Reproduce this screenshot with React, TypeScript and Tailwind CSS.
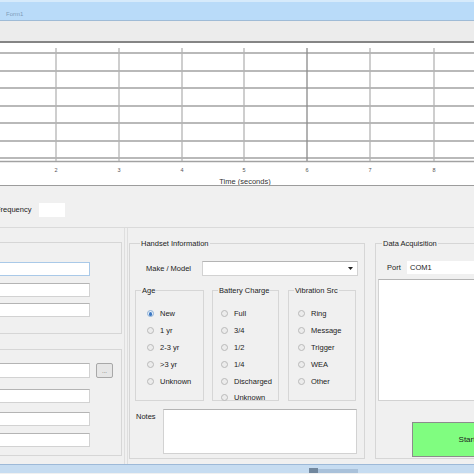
const hLines = [10, 28, 45, 63, 80, 98, 115]
const vLines = [
  { x: 56, label: '2' },
  { x: 119, label: '3' },
  { x: 182, label: '4' },
  { x: 244, label: '5' },
  { x: 307, label: '6' },
  { x: 370, label: '7' },
  { x: 434, label: '8' },
]

const TimeChart = () => (
  <svg width="474" height="143" className="block bg-white">
    {hLines.map((y) => (
      <line key={y} x1="0" x2="474" y1={y} y2={y} stroke="#a2a2a2" strokeWidth="1.3" />
    ))}
    <line x1="0" x2="474" y1="118.5" y2="118.5" stroke="#a2a2a2" strokeWidth="1.3" />
    {vLines.map((v) => (
      <g key={v.x}>
        <line
          x1={v.x}
          x2={v.x}
          y1="5"
          y2="118"
          stroke={v.x === 307 ? '#8a8a8a' : '#b4b4b4'}
          strokeWidth="1.3"
        />
        <text x={v.x} y="129" fontSize="5.5" fill="#555" textAnchor="middle" fontFamily="Liberation Sans, Arial, sans-serif">
          {v.label}
        </text>
      </g>
    ))}
    <text x="245" y="140.5" fontSize="7.5" fill="#333" textAnchor="middle" fontFamily="Liberation Sans, Arial, sans-serif">
      Time (seconds)
    </text>
    <line x1="0" x2="474" y1="142.5" y2="142.5" stroke="#9c9c9c" strokeWidth="1" />
  </svg>
)

const Radio = ({ label, checked = false }: { label: string; checked?: boolean }) => (
  <div className="flex h-[16.8px] items-center">
    <span
      className={`flex h-[7px] w-[7px] shrink-0 items-center justify-center rounded-full border ${
        checked ? 'border-[#8fb0d4] bg-[#e4eef8]' : 'border-[#b9b9b9] bg-[#ececec]'
      }`}
    >
      {checked && <span className="h-[3.5px] w-[3.5px] rounded-full bg-[#3d78c2]" />}
    </span>
    <span className="ml-[6px] whitespace-nowrap">{label}</span>
  </div>
)

const SubGroup = ({
  title,
  items,
  width,
  inset,
}: {
  title: string
  items: { label: string; checked?: boolean }[]
  width: string
  inset: string
}) => (
  <fieldset className={`h-[115px] shrink-0 border border-[#d6d6d6] ${width}`}>
    <legend className="ml-[5px] whitespace-nowrap px-[1px] text-[7.5px] leading-[9px]">{title}</legend>
    <div className={`mt-[10.5px] flex flex-col ${inset}`}>
      {items.map((item) => (
        <Radio key={item.label} label={item.label} checked={item.checked} />
      ))}
    </div>
  </fieldset>
)

const field = 'shrink-0 border border-[#d2d2d2] border-t-[#b4b4b4] bg-white'

export default function App() {
  return (
    <div className="flex h-[474px] w-[474px] flex-col overflow-hidden bg-[#f0f0f0] font-['Liberation_Sans',Arial,sans-serif] text-[7.5px] leading-[9px] text-[#1c1c1c]">
      {/* title bar */}
      <div className="flex h-[21px] shrink-0 items-end border-b border-[#9fbbd6] border-t-2 border-t-[#d6eafb] bg-[#b9dbf9] pb-[3px] pl-[6px]">
        <span className="text-[6px] leading-[6px] text-[#7f9cba]">Form1</span>
      </div>

      {/* toolbar strip */}
      <div className="h-[22px] shrink-0 border-b-2 border-[#858585] bg-[#ececec]" />

      {/* chart */}
      <TimeChart />

      {/* frequency row */}
      <div className="flex h-[42px] shrink-0 items-start border-b border-[#dadada] pt-[17px]">
        <span className="-ml-[4px] leading-[14px]">Frequency</span>
        <input className="ml-[8px] h-[14px] w-[26px] shrink-0 bg-white outline-none" />
      </div>

      {/* main area */}
      <div className="flex h-[236px] shrink-0">
        {/* left column */}
        <div className="-ml-[10px] flex w-[132px] shrink-0 flex-col">
          <div className="mt-[14px] flex h-[92px] flex-col border border-[#d6d6d6] pl-[1px]">
            <input className="mt-[19px] h-[14px] w-[98px] shrink-0 border border-[#a9c9e8] bg-white outline-none" />
            <input className={`mt-[7px] h-[14px] w-[98px] outline-none ${field}`} />
            <input className={`mt-[6px] h-[14px] w-[98px] outline-none ${field}`} />
          </div>
          <div className="mt-[15px] flex h-[107px] flex-col border border-[#d6d6d6] pl-[1px]">
            <div className="mt-[13px] flex items-center">
              <input className={`h-[15px] w-[98px] outline-none ${field}`} />
              <button
                type="button"
                className="ml-[6px] flex h-[15px] w-[17px] items-center justify-center rounded-[2px] border border-[#a8a8a8] bg-[#e6e6e6] text-[6px] leading-[6px] text-[#555]"
              >
                ...
              </button>
            </div>
            <input className={`mt-[11px] h-[14px] w-[98px] outline-none ${field}`} />
            <input className={`mt-[9px] h-[14px] w-[98px] outline-none ${field}`} />
            <input className={`mt-[7px] h-[14px] w-[98px] outline-none ${field}`} />
          </div>
        </div>

        <div className="ml-[2px] w-[4px] shrink-0 border-x border-[#dedede]" />

        {/* handset information */}
        <fieldset className="ml-[1px] mt-[11px] h-[220px] w-[236px] shrink-0 border border-[#d6d6d6] px-[5px]">
          <legend className="ml-[5px] px-[1px]">Handset Information</legend>
          <div className="mt-[13px] flex h-[15px] items-center">
            <span className="ml-[11px] w-[56px] shrink-0">Make / Model</span>
            <div className={`flex h-[15px] w-[156px] items-center justify-end pr-[4px] ${field}`}>
              <svg width="5" height="3" viewBox="0 0 5 3">
                <path d="M0 0h5L2.5 3z" fill="#222" />
              </svg>
            </div>
          </div>

          <div className="mt-[10px] flex">
            <SubGroup
              title="Age"
              width="w-[69px]"
              inset="pl-[11px]"
              items={[{ label: 'New', checked: true }, { label: '1 yr' }, { label: '2-3 yr' }, { label: '>3 yr' }, { label: 'Unknown' }]}
            />
            <div className="w-[8px] shrink-0" />
            <SubGroup
              title="Battery Charge"
              width="w-[67px]"
              inset="pl-[8px]"
              items={[{ label: 'Full' }, { label: '3/4' }, { label: '1/2' }, { label: '1/4' }, { label: 'Discharged' }, { label: 'Unknown' }]}
            />
            <div className="w-[9px] shrink-0" />
            <SubGroup
              title="Vibration Src"
              width="w-[68px]"
              inset="pl-[9px]"
              items={[{ label: 'Ring' }, { label: 'Message' }, { label: 'Trigger' }, { label: 'WEA' }, { label: 'Other' }]}
            />
          </div>

          <div className="mt-[8px] flex">
            <span className="ml-[1px] mt-[3px] w-[27px] shrink-0">Notes</span>
            <textarea className={`h-[45px] w-[194px] resize-none outline-none ${field}`} />
          </div>
        </fieldset>

        {/* data acquisition */}
        <fieldset className="ml-[10px] mt-[11px] h-[220px] w-[150px] shrink-0 border border-[#d6d6d6] px-[2px]">
          <legend className="ml-[4px] px-[1px]">Data Acquisition</legend>
          <div className="mt-[13px] flex h-[13px] items-center">
            <span className="ml-[9px] w-[20px] shrink-0">Port</span>
            <div className="flex h-[13px] flex-1 items-center bg-white pl-[3px]">COM1</div>
          </div>
          <div className={`mt-[5px] h-[122px] w-full ${field}`} />
          <button
            type="button"
            className="ml-[34px] mt-[21px] flex h-[35px] w-[110px] items-center justify-center border border-[#8c8c8c] bg-[#80fd80] text-[8px] text-[#1c1c1c]"
          >
            Start
          </button>
        </fieldset>
      </div>

      {/* taskbar */}
      <div className="flex h-[9px] shrink-0 items-end border-t border-[#9db9d8] bg-[#c6dcf1]">
        <div className="ml-[309px] h-[5px] w-[9px] bg-[#71879e]" />
        <div className="h-[4px] w-[40px] bg-[#a9c1da]" />
      </div>
    </div>
  )
}
